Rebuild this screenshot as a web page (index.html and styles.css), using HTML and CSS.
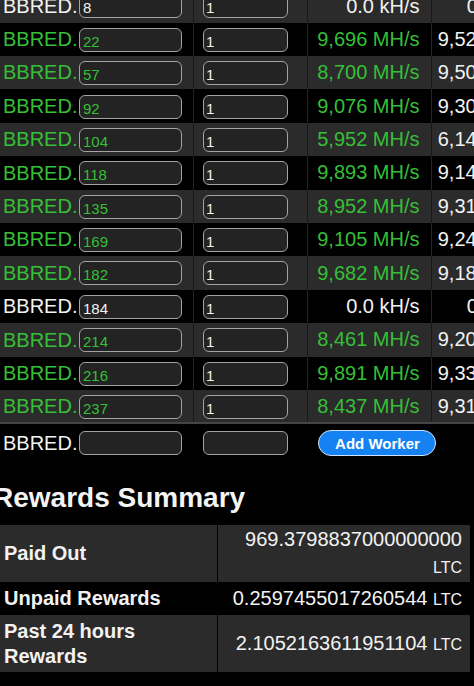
FILE: index.html
```html
<!DOCTYPE html>
<html lang="en">
<head>
<meta charset="utf-8">
<title>Workers</title>
<link rel="stylesheet" href="styles.css">
</head>
<body>
<main class="page">
  <table class="workers">
    <colgroup><col class="c-name"><col class="c-diff"><col class="c-rate"><col class="c-avg"></colgroup>
    <tbody>
      <tr class="idle"><td class="name"><span class="prefix">BBRED.</span><input class="field name-field" value="8"></td><td class="diff"><input class="field diff-field" value="1"></td><td class="rate">0.0 kH/s</td><td class="avg">0.0 kH/s</td></tr>
      <tr class="live"><td class="name"><span class="prefix">BBRED.</span><input class="field name-field" value="22"></td><td class="diff"><input class="field diff-field" value="1"></td><td class="rate">9,696 MH/s</td><td class="avg">9,525 MH/s</td></tr>
      <tr class="live"><td class="name"><span class="prefix">BBRED.</span><input class="field name-field" value="57"></td><td class="diff"><input class="field diff-field" value="1"></td><td class="rate">8,700 MH/s</td><td class="avg">9,503 MH/s</td></tr>
      <tr class="live"><td class="name"><span class="prefix">BBRED.</span><input class="field name-field" value="92"></td><td class="diff"><input class="field diff-field" value="1"></td><td class="rate">9,076 MH/s</td><td class="avg">9,302 MH/s</td></tr>
      <tr class="live"><td class="name"><span class="prefix">BBRED.</span><input class="field name-field" value="104"></td><td class="diff"><input class="field diff-field" value="1"></td><td class="rate">5,952 MH/s</td><td class="avg">6,143 MH/s</td></tr>
      <tr class="live"><td class="name"><span class="prefix">BBRED.</span><input class="field name-field" value="118"></td><td class="diff"><input class="field diff-field" value="1"></td><td class="rate">9,893 MH/s</td><td class="avg">9,145 MH/s</td></tr>
      <tr class="live"><td class="name"><span class="prefix">BBRED.</span><input class="field name-field" value="135"></td><td class="diff"><input class="field diff-field" value="1"></td><td class="rate">8,952 MH/s</td><td class="avg">9,312 MH/s</td></tr>
      <tr class="live"><td class="name"><span class="prefix">BBRED.</span><input class="field name-field" value="169"></td><td class="diff"><input class="field diff-field" value="1"></td><td class="rate">9,105 MH/s</td><td class="avg">9,241 MH/s</td></tr>
      <tr class="live"><td class="name"><span class="prefix">BBRED.</span><input class="field name-field" value="182"></td><td class="diff"><input class="field diff-field" value="1"></td><td class="rate">9,682 MH/s</td><td class="avg">9,187 MH/s</td></tr>
      <tr class="idle"><td class="name"><span class="prefix">BBRED.</span><input class="field name-field" value="184"></td><td class="diff"><input class="field diff-field" value="1"></td><td class="rate">0.0 kH/s</td><td class="avg">0.0 kH/s</td></tr>
      <tr class="live"><td class="name"><span class="prefix">BBRED.</span><input class="field name-field" value="214"></td><td class="diff"><input class="field diff-field" value="1"></td><td class="rate">8,461 MH/s</td><td class="avg">9,204 MH/s</td></tr>
      <tr class="live"><td class="name"><span class="prefix">BBRED.</span><input class="field name-field" value="216"></td><td class="diff"><input class="field diff-field" value="1"></td><td class="rate">9,891 MH/s</td><td class="avg">9,331 MH/s</td></tr>
      <tr class="live"><td class="name"><span class="prefix">BBRED.</span><input class="field name-field" value="237"></td><td class="diff"><input class="field diff-field" value="1"></td><td class="rate">8,437 MH/s</td><td class="avg">9,314 MH/s</td></tr>
    </tbody>
  </table>

  <form class="add-row">
    <span class="prefix">BBRED.</span>
    <input class="field name-field" value="">
    <input class="field diff-field new-diff" value="">
    <button type="button" class="add-btn">Add Worker</button>
  </form>

  <h2 class="section-title">Rewards Summary</h2>

  <table class="summary">
    <tbody>
      <tr class="tall"><th>Paid Out</th><td>969.3798837000000000 <span class="unit">LTC</span></td></tr>
      <tr class="plain"><th>Unpaid Rewards</th><td>0.2597455017260544 <span class="unit">LTC</span></td></tr>
      <tr class="tall"><th>Past 24 hours Rewards</th><td>2.1052163611951104 <span class="unit">LTC</span></td></tr>
    </tbody>
  </table>
</main>
</body>
</html>
```

FILE: styles.css
```css
html, body {
  margin: 0;
  padding: 0;
  background: #000;
  overflow: hidden;
}

body {
  font-family: "Liberation Sans", Arial, Helvetica, sans-serif;
  color: #f2f2f2;
  width: 474px;
  height: 686px;
}

.page {
  display: flex;
  flex-direction: column;
  align-items: flex-start;
}

/* ---------- Workers table ---------- */
.workers {
  margin-top: -10.7px;
  border-collapse: collapse;
  table-layout: fixed;
  width: 552px;
  flex: none;
  border-bottom: 2px solid #454545;
}

.c-name { width: 193px; }
.c-diff { width: 114px; }
.c-rate { width: 124px; }
.c-avg  { width: 121px; }

.workers tr { height: 33.4px; }
.workers tr:nth-child(odd) { background: #2b2b2b; }
.workers tr:nth-child(even) { background: #000; }

.workers td {
  padding: 0;
  vertical-align: middle;
  white-space: nowrap;
  font-size: 20px;
  border-left: 1px solid #181818;
}
.workers tr:nth-child(even) td { border-left-color: #242424; }
.workers td:first-child { border-left: none; }

.name { padding-left: 3px !important; }
.diff { padding-left: 9px !important; }
.rate { text-align: right; padding-right: 11px !important; }
.avg  { text-align: right; padding-right: 12px !important; color: #f2f2f2; }

.live .prefix,
.live .name-field,
.live .rate { color: #36bf36; }

.idle .prefix,
.idle .rate { color: #f2f2f2; }

.prefix {
  font-size: 20px;
  vertical-align: middle;
}

.field {
  box-sizing: border-box;
  height: 24px;
  border: 1.5px solid #a3a3a3;
  border-radius: 6px;
  background: #232323;
  color: #f2f2f2;
  font-family: "Liberation Sans", Arial, Helvetica, sans-serif;
  font-size: 15px;
  padding: 3px 0 0 2.5px;
  margin: 0;
  vertical-align: middle;
  outline: none;
}

.name-field {
  width: 103px;
  margin-left: 2px;
}

.diff-field {
  width: 85px;
}

/* ---------- Add worker row ---------- */
.add-row {
  display: flex;
  align-items: center;
  height: 34px;
  margin: 2px 0 0 0;
  padding-left: 3px;
}

.add-row .prefix { color: #f2f2f2; }

.new-diff { margin-left: 21px; }

.add-btn {
  margin-left: 30px;
  width: 118px;
  height: 26px;
  border-radius: 13px;
  border: 1px solid #cfe2fb;
  background: #1681f0;
  color: #fff;
  font-family: "Liberation Sans", Arial, Helvetica, sans-serif;
  font-weight: bold;
  font-size: 15px;
  padding: 0;
}

/* ---------- Rewards summary ---------- */
.section-title {
  margin: 22px 0 0 -7px;
  font-size: 28px;
  line-height: 32px;
  font-weight: bold;
  color: #f4f4f4;
  white-space: nowrap;
}

.summary {
  margin-top: 11px;
  width: 470px;
  border-collapse: collapse;
  table-layout: fixed;
}

.summary th,
.summary td {
  font-size: 20px;
  padding: 0;
  vertical-align: middle;
}

.summary th {
  width: 213px;
  text-align: left;
  font-weight: bold;
  padding-left: 4px;
  line-height: 25px;
  border-right: 1.5px solid #000;
}

.summary td {
  text-align: right;
  padding-right: 8px;
  line-height: 26.5px;
}

.summary tr.tall { background: #2b2b2b; height: 57px; }
.summary tr.plain { background: #000; height: 33px; }

.unit { font-size: 16px; }
```
